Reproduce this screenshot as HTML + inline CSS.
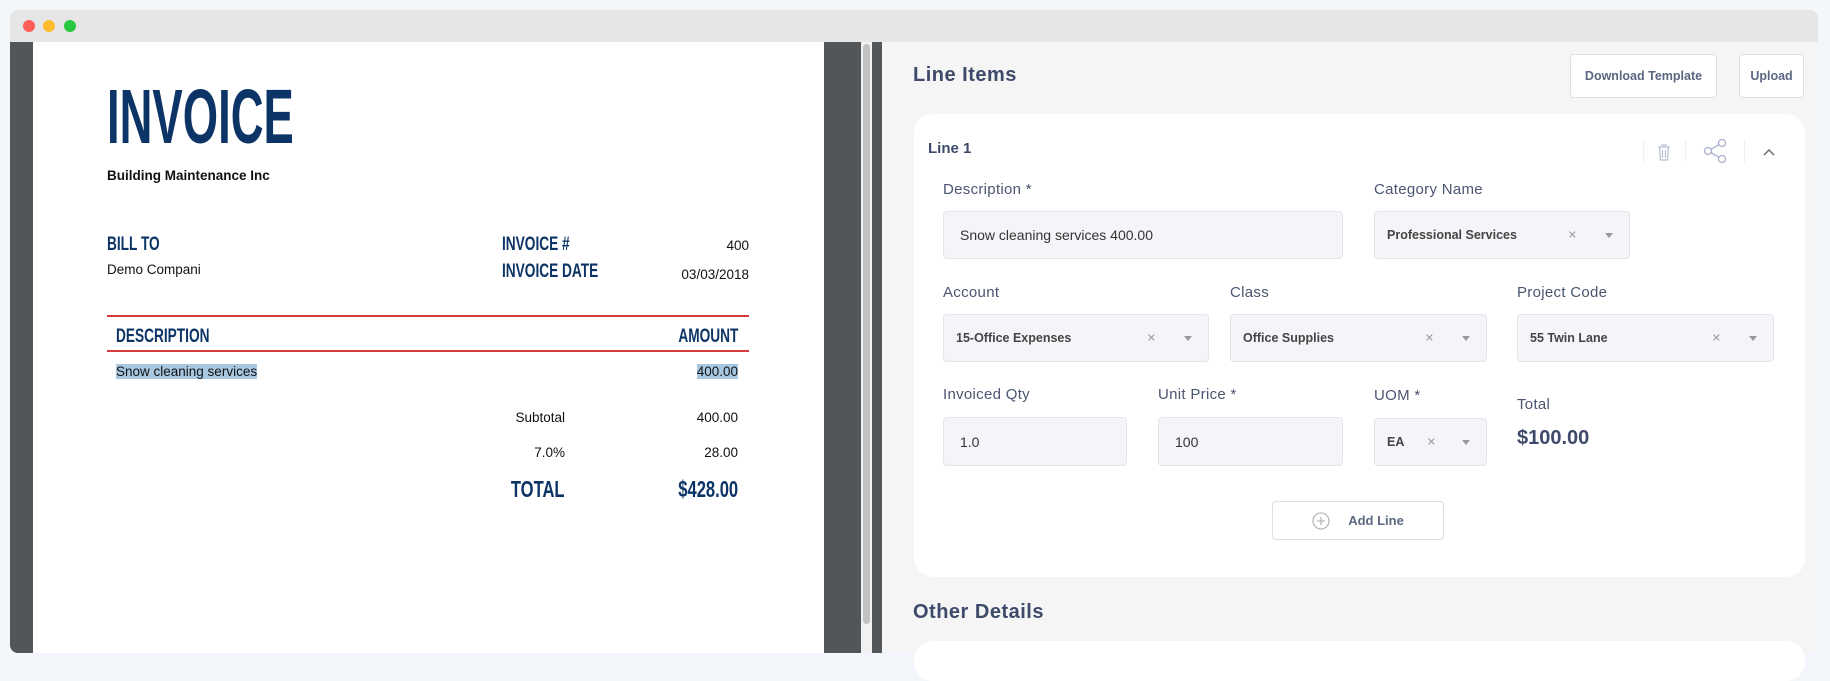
<!DOCTYPE html>
<html><head><meta charset="utf-8"><style>
*{margin:0;padding:0;box-sizing:border-box}
body{width:1830px;height:663px;background:#f3f6fa;position:relative;overflow:hidden;font-family:"Liberation Sans",sans-serif}
.a{position:absolute}
.cd{position:absolute;font-family:"Liberation Sans Narrow","Liberation Sans",sans-serif;font-weight:bold;color:#0d3466;white-space:nowrap;transform-origin:left top}
.cdr{transform-origin:right top;text-align:right}
.t{position:absolute;font-size:14px;color:#111;white-space:nowrap}
.lbl{position:absolute;font-size:15px;color:#4a5570;letter-spacing:.3px;white-space:nowrap}
.in{position:absolute;background:#f4f5f8;border:1px solid #e3e5ea;border-radius:4px;font-size:14px;color:#333;padding-left:16px;display:flex;align-items:center}
.sel{font-size:12.5px;color:#444;padding-left:12px;font-weight:bold}
.sel .x{position:absolute;right:52px;top:50%;transform:translateY(-50%);color:#999;font-size:11px;font-weight:normal}
.sel .ar{position:absolute;right:16px;top:50%;margin-top:-2px;border-left:4px solid transparent;border-right:4px solid transparent;border-top:5px solid #999}
.btn{position:absolute;background:#fff;border:1px solid #dcdfe5;border-radius:4px;font-size:12.5px;font-weight:bold;color:#5b6781;display:flex;align-items:center;justify-content:center}
.sep{position:absolute;top:140px;width:1px;height:22px;background:#eceef2}
</style></head><body>
<div class="a" style="left:10px;top:10px;width:1808px;height:643px;background:#f5f5f6;border-radius:8px;overflow:hidden">
 <div class="a" style="left:0;top:0;width:1808px;height:32px;background:#e6e6e6"></div>
 <div class="a" style="left:13px;top:10px;width:12px;height:12px;border-radius:50%;background:#fd5f57"></div>
 <div class="a" style="left:33px;top:10px;width:12px;height:12px;border-radius:50%;background:#febc2e"></div>
 <div class="a" style="left:54px;top:10px;width:12px;height:12px;border-radius:50%;background:#28c840"></div>
 <div class="a" style="left:0;top:32px;width:862px;height:611px;background:#525659"></div>
 <div class="a" style="left:851px;top:32px;width:11px;height:611px;background:#f1f1f1"></div>
 <div class="a" style="left:853px;top:34px;width:7px;height:580px;background:#c1c1c1;border-radius:4px"></div>
 <div class="a" style="left:862px;top:32px;width:10px;height:611px;background:#525659"></div>
</div>
<div class="a" style="left:33px;top:42px;width:791px;height:611px;background:#fff"></div>
<div class="cd" style="left:107px;top:73px;font-size:77px;transform:scaleX(.59)">INVOICE</div>
<div class="t" style="left:107px;top:168px;font-weight:bold;font-size:13.5px">Building Maintenance Inc</div>
<div class="cd" style="left:107px;top:234px;font-size:19px;transform:scaleX(.72)">BILL TO</div>
<div class="t" style="left:107px;top:262px;font-size:13.5px">Demo Compani</div>
<div class="cd" style="left:502px;top:234px;font-size:19px;transform:scaleX(.72)">INVOICE #</div>
<div class="cd" style="left:502px;top:261px;font-size:19px;transform:scaleX(.72)">INVOICE DATE</div>
<div class="t" style="right:1081px;top:238px;font-size:13.5px">400</div>
<div class="t" style="right:1081px;top:267px;font-size:13.5px">03/03/2018</div>
<div class="a" style="left:107px;top:315px;width:642px;height:2px;background:#d33a3a"></div>
<div class="cd" style="left:116px;top:326px;font-size:19px;transform:scaleX(.72)">DESCRIPTION</div>
<div class="cd cdr" style="right:1092px;top:326px;font-size:19px;transform:scaleX(.72)">AMOUNT</div>
<div class="a" style="left:107px;top:350px;width:642px;height:2px;background:#d33a3a"></div>
<div class="t" style="left:116px;top:364px;font-size:13.5px;background:#a8c8e2">Snow cleaning services</div>
<div class="t" style="right:1092px;top:364px;font-size:13.5px;background:#a8c8e2">400.00</div>
<div class="t" style="right:1265px;top:410px;font-size:13.5px">Subtotal</div>
<div class="t" style="right:1092px;top:410px;font-size:13.5px">400.00</div>
<div class="t" style="right:1265px;top:445px;font-size:13.5px">7.0%</div>
<div class="t" style="right:1092px;top:445px;font-size:13.5px">28.00</div>
<div class="cd cdr" style="right:1265px;top:476px;font-size:23px;transform:scaleX(.72)">TOTAL</div>
<div class="cd cdr" style="right:1092px;top:476px;font-size:23px;transform:scaleX(.72)">$428.00</div>

<div class="a" style="left:913px;top:64px;font-size:20px;font-weight:bold;color:#3e4a6a;letter-spacing:.5px">Line Items</div>
<div class="btn" style="left:1570px;top:54px;width:147px;height:44px">Download Template</div>
<div class="btn" style="left:1739px;top:54px;width:65px;height:44px">Upload</div>
<div class="a" style="left:914px;top:114px;width:891px;height:463px;background:#fff;border-radius:19px"></div>
<div class="a" style="left:928px;top:140px;font-size:15px;font-weight:bold;color:#3e4a6a">Line 1</div>
<div class="sep" style="left:1643px"></div><div class="sep" style="left:1685px"></div><div class="sep" style="left:1744px"></div>
<svg class="a" style="left:1656px;top:143px" width="16" height="18" viewBox="0 0 16 18" fill="none" stroke="#b8bdd0" stroke-width="1.2"><path d="M2 4h12M6 4V2h4v2M3.5 4l1 13h7l1-13M6.5 7v8M9.5 7v8"/></svg>
<svg class="a" style="left:1703px;top:138px" width="26" height="26" viewBox="0 0 26 26" fill="none" stroke="#a8aecb" stroke-width="1.3"><circle cx="19" cy="5" r="3.5"/><circle cx="5" cy="13" r="3.5"/><circle cx="19" cy="21" r="3.5"/><path d="M8 11.3l8-4.6M8 14.7l8 4.6"/></svg>
<svg class="a" style="left:1762px;top:148px" width="14" height="9" viewBox="0 0 14 9" fill="none" stroke="#666" stroke-width="1.4"><path d="M2 7l5-5 5 5"/></svg>

<div class="lbl" style="left:943px;top:181px">Description *</div>
<div class="in" style="left:943px;top:211px;width:400px;height:48px">Snow cleaning services 400.00</div>
<div class="lbl" style="left:1374px;top:181px">Category Name</div>
<div class="in sel" style="left:1374px;top:211px;width:256px;height:48px">Professional Services<span class="x">✕</span><span class="ar"></span></div>

<div class="lbl" style="left:943px;top:284px">Account</div>
<div class="in sel" style="left:943px;top:314px;width:266px;height:48px">15-Office Expenses<span class="x">✕</span><span class="ar"></span></div>
<div class="lbl" style="left:1230px;top:284px">Class</div>
<div class="in sel" style="left:1230px;top:314px;width:257px;height:48px">Office Supplies<span class="x">✕</span><span class="ar"></span></div>
<div class="lbl" style="left:1517px;top:284px">Project Code</div>
<div class="in sel" style="left:1517px;top:314px;width:257px;height:48px">55 Twin Lane<span class="x">✕</span><span class="ar"></span></div>

<div class="lbl" style="left:943px;top:386px">Invoiced Qty</div>
<div class="in" style="left:943px;top:417px;width:184px;height:49px">1.0</div>
<div class="lbl" style="left:1158px;top:386px">Unit Price *</div>
<div class="in" style="left:1158px;top:417px;width:185px;height:49px">100</div>
<div class="lbl" style="left:1374px;top:387px">UOM *</div>
<div class="in sel" style="left:1374px;top:418px;width:113px;height:48px">EA<span class="x" style="right:50px">✕</span><span class="ar"></span></div>
<div class="lbl" style="left:1517px;top:396px">Total</div>
<div class="a" style="left:1517px;top:427px;font-size:20px;font-weight:bold;color:#3e4a6a">$100.00</div>

<div class="btn" style="left:1272px;top:501px;width:172px;height:39px;font-size:13px;color:#5b6781"><svg width="18" height="18" viewBox="0 0 18 18" fill="none" stroke="#aaa" stroke-width="1.1" style="margin-right:18px"><circle cx="9" cy="9" r="8"/><path d="M9 5v8M5 9h8"/></svg>Add Line</div>

<div class="a" style="left:913px;top:601px;font-size:20px;font-weight:bold;color:#3e4a6a;letter-spacing:.5px">Other Details</div>
<div class="a" style="left:914px;top:641px;width:891px;height:40px;background:#fff;border-radius:19px"></div>
</body></html>
